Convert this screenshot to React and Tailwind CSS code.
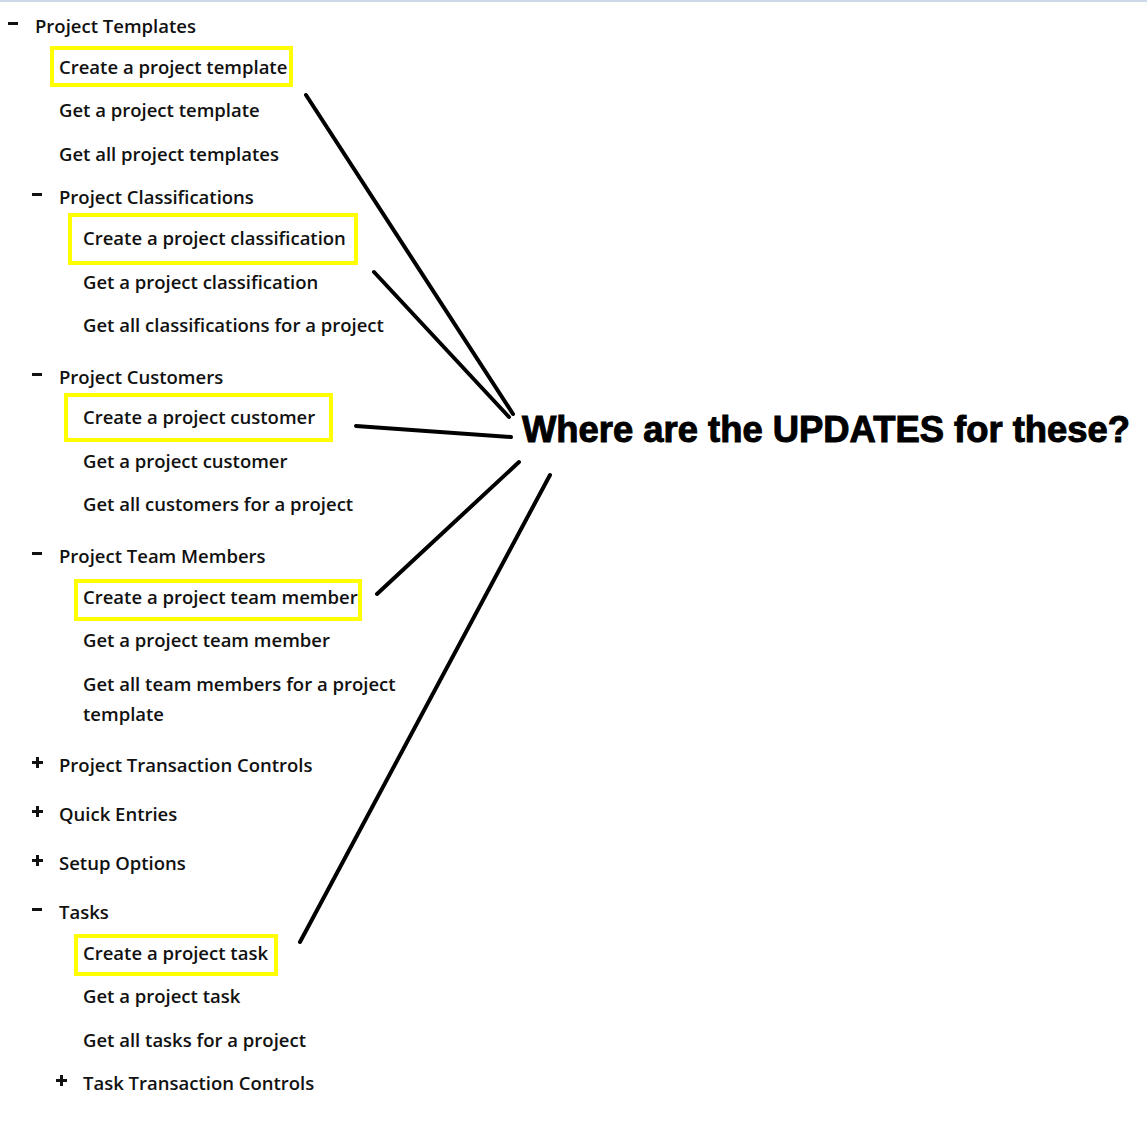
const rows = [
  { label: "Project Templates", level: 0, icon: "minus", mt: "mt-[9px]" },
  { label: "Create a project template", level: 1, mt: "mt-[11px]" },
  { label: "Get a project template", level: 1, mt: "mt-[13px]" },
  { label: "Get all project templates", level: 1, mt: "mt-[14px]" },
  { label: "Project Classifications", level: 1, icon: "minus", mt: "mt-[13px]" },
  { label: "Create a project classification", level: 2, mt: "mt-[11px]" },
  { label: "Get a project classification", level: 2, mt: "mt-[14px]" },
  { label: "Get all classifications for a project", level: 2, mt: "mt-[13px]" },
  { label: "Project Customers", level: 1, icon: "minus", mt: "mt-[22px]" },
  { label: "Create a project customer", level: 2, mt: "mt-[10px]" },
  { label: "Get a project customer", level: 2, mt: "mt-[14px]" },
  { label: "Get all customers for a project", level: 2, mt: "mt-[13px]" },
  { label: "Project Team Members", level: 1, icon: "minus", mt: "mt-[22px]" },
  { label: "Create a project team member", level: 2, mt: "mt-[11px]" },
  { label: "Get a project team member", level: 2, mt: "mt-[13px]" },
  { label: "Get all team members for a project template", level: 2, mt: "mt-[14px]" },
  { label: "Project Transaction Controls", level: 1, icon: "plus", mt: "mt-[21px]" },
  { label: "Quick Entries", level: 1, icon: "plus", mt: "mt-[19px]" },
  { label: "Setup Options", level: 1, icon: "plus", mt: "mt-[19px]" },
  { label: "Tasks", level: 1, icon: "minus", mt: "mt-[19px]" },
  { label: "Create a project task", level: 2, mt: "mt-[11px]" },
  { label: "Get a project task", level: 2, mt: "mt-[13px]" },
  { label: "Get all tasks for a project", level: 2, mt: "mt-[14px]" },
  { label: "Task Transaction Controls", level: 2, icon: "plus", mt: "mt-[13px]" },
];

const indent = ["pl-[8px]", "pl-[32px]", "pl-[56px]"];

const Minus = () => <span className="block w-[10px] h-[3px] bg-[#111]" />;

const Plus = () => (
  <span className="relative block w-[11px] h-[11px]">
    <span className="absolute left-0 top-[4px] w-[11px] h-[3px] bg-[#111]" />
    <span className="absolute left-[4px] top-0 w-[3px] h-[11px] bg-[#111]" />
  </span>
);

function Row({ row }) {
  return (
    <div className={`flex items-start ${indent[row.level]} ${row.mt}`}>
      <div className="w-[27px] h-[30px] flex items-center shrink-0 -translate-y-[3px]">
        {row.icon === "minus" && <Minus />}
        {row.icon === "plus" && <Plus />}
      </div>
      <span className="max-w-[345px] leading-[30px]">{row.label}</span>
    </div>
  );
}

// hand-drawn annotation boxes and arrows
const boxes = [
  [52, 48, 239, 37],
  [70, 215, 286, 48],
  [66, 395, 265, 45],
  [76, 581, 284, 38],
  [76, 936, 200, 38],
];

const strokes = [
  [306, 95, 513, 414],
  [374, 272, 509, 417],
  [356, 426, 511, 437],
  [377, 594, 519, 462],
  [300, 942, 550, 475],
];

export default function App() {
  return (
    <div className="relative w-[1147px] h-[1128px] bg-white border-t-2 border-[#cdd8ea] overflow-hidden">
      <div
        className="text-[18.5px] font-semibold text-[#111] pb-6"
        style={{ fontFamily: '"Open Sans", "Noto Sans", sans-serif' }}
      >
        {rows.map((r) => (
          <Row key={r.label} row={r} />
        ))}
      </div>

      <svg className="absolute inset-0 pointer-events-none" width="1147" height="1128">
        {boxes.map(([x, y, w, h], i) => (
          <rect key={i} x={x} y={y - 2} width={w} height={h} fill="none" stroke="#ffff00" strokeWidth="4" />
        ))}
        {strokes.map(([x1, y1, x2, y2], i) => (
          <line key={i} x1={x1} y1={y1 - 2} x2={x2} y2={y2 - 2} stroke="#000" strokeWidth="4" strokeLinecap="round" />
        ))}
      </svg>

      <div
        className="absolute left-[522px] top-[410px] text-[36.4px] font-bold leading-[36px] text-black whitespace-nowrap [-webkit-text-stroke:1px_black]"
        style={{ fontFamily: '"Liberation Sans", Arial, sans-serif' }}
      >
        Where are the UPDATES for these?
      </div>
    </div>
  );
}
